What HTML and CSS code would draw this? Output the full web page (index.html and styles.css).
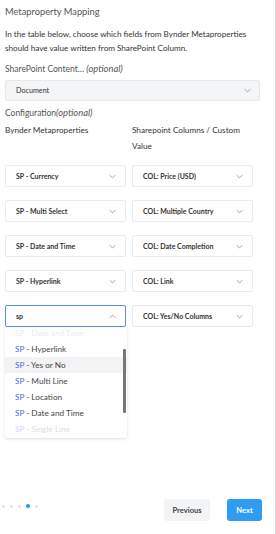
FILE: index.html
```html
<!DOCTYPE html>
<html>
<head>
<meta charset="utf-8">
<link rel="stylesheet" href="styles.css">
</head>
<body>
<div class="panel">
  <div class="content">
    <h1 class="title">Metaproperty Mapping</h1>
    <p class="intro">In the table below, choose which fields from Bynder Metaproperties should have value written from SharePoint Column.</p>
    <div class="label">SharePoint Content… <em>(optional)</em></div>
    <div class="select grey"><span>Document</span><svg class="chev" viewBox="0 0 10 6"><path d="M1 1l4 4 4-4"/></svg></div>
    <div class="label cfg">Configuration<em>(optional)</em></div>
    <div class="heads">
      <div class="colhead">Bynder Metaproperties</div>
      <div class="colhead">Sharepoint Columns / Custom Value</div>
    </div>
    <div class="rows">
      <div class="select"><span>SP - Currency</span><svg class="chev" viewBox="0 0 10 6"><path d="M1 1l4 4 4-4"/></svg></div>
      <div class="select"><span>COL: Price (USD)</span><svg class="chev" viewBox="0 0 10 6"><path d="M1 1l4 4 4-4"/></svg></div>

      <div class="select"><span>SP - Multi Select</span><svg class="chev" viewBox="0 0 10 6"><path d="M1 1l4 4 4-4"/></svg></div>
      <div class="select"><span>COL: Multiple Country</span><svg class="chev" viewBox="0 0 10 6"><path d="M1 1l4 4 4-4"/></svg></div>

      <div class="select"><span>SP - Date and Time</span><svg class="chev" viewBox="0 0 10 6"><path d="M1 1l4 4 4-4"/></svg></div>
      <div class="select"><span>COL: Date Completion</span><svg class="chev" viewBox="0 0 10 6"><path d="M1 1l4 4 4-4"/></svg></div>

      <div class="select"><span>SP - Hyperlink</span><svg class="chev" viewBox="0 0 10 6"><path d="M1 1l4 4 4-4"/></svg></div>
      <div class="select"><span>COL: Link</span><svg class="chev" viewBox="0 0 10 6"><path d="M1 1l4 4 4-4"/></svg></div>

      <div class="combo">
        <div class="select focus"><span>sp</span><svg class="chev" viewBox="0 0 10 6"><path d="M1 5l4-4 4 4"/></svg></div>
        <div class="menu">
          <div class="menu-inner">
            <div class="opt cut"><b>SP</b> - Date and Time</div>
            <div class="opt"><b>SP</b> - Hyperlink</div>
            <div class="opt hl"><b>SP</b> - Yes or No</div>
            <div class="opt"><b>SP</b> - Multi Line</div>
            <div class="opt"><b>SP</b> - Location</div>
            <div class="opt"><b>SP</b> - Date and Time</div>
            <div class="opt faded"><b>SP</b> - Single Line</div>
          </div>
          <div class="thumb"></div>
        </div>
      </div>
      <div class="select"><span>COL: Yes/No Columns</span><svg class="chev" viewBox="0 0 10 6"><path d="M1 1l4 4 4-4"/></svg></div>
    </div>
  </div>
  <div class="footer">
    <div class="dots"><i></i><i></i><i></i><i class="on"></i><i></i></div>
    <div class="buttons">
      <button class="btn prev">Previous</button>
      <button class="btn next">Next</button>
    </div>
  </div>
</div>
</body>
</html>
```
FILE: styles.css
```css
* { box-sizing: border-box; }
html, body { margin: 0; padding: 0; background: #fff; }
body { font-family: "Lato", "Liberation Sans", sans-serif; color: #333; }
.panel {
  width: 276px;
  height: 534px;
  border-right: 1px solid #dcdcdc;
  display: flex;
  flex-direction: column;
}
.content { padding: 0 15px 0 5px; flex: 1; }
.title {
  margin: 0;
  padding-top: 5px;
  font-size: 9.3px;
  line-height: 14px;
  font-weight: 400;
  color: #555;
}
.intro {
  margin: 8px 0 0;
  font-size: 8.15px;
  line-height: 14px;
  color: #333;
}
.label {
  margin-top: 7px;
  font-size: 8.5px;
  line-height: 14px;
  color: #555;
}
.label em { font-style: italic; font-size: 1.1em; }
.label.cfg { margin-top: 5px; }
.select {
  position: relative;
  height: 22px;
  border: 1px solid #ebebeb;
  border-radius: 2px;
  background: #fff;
  display: flex;
  align-items: center;
  justify-content: space-between;
  padding: 0 9px 0 10px;
  font-size: 7px;
  font-weight: 700;
  color: #333;
}
.select.grey {
  margin-top: 4px;
  height: 21px;
  background: #f4f5f6;
  border-color: #e8e9eb;
  font-weight: 400;
  font-size: 7.2px;
  padding-left: 10px;
  padding-right: 8px;
}
.chev { width: 7px; height: 5px; fill: none; stroke: #888; stroke-width: 1.1; }
.heads, .rows {
  display: grid;
  grid-template-columns: 121px 121px;
  column-gap: 6px;
}
.heads { margin-top: 2px; }
.rows { margin-top: 11px; row-gap: 13px; }
.colhead {
  font-size: 8.2px;
  line-height: 16px;
  color: #333;
}
.combo { position: relative; }
.select.focus { border-color: #5b8df0; }
.menu {
  position: absolute;
  left: 0;
  top: 23px;
  width: 122px;
  height: 110px;
  background: #fff;
  border-radius: 2px;
  box-shadow: 0 1px 3px rgba(0,0,0,0.12);
  overflow: hidden;
  z-index: 5;
}
.menu-inner { margin-top: -3px; }
.opt {
  height: 16px;
  line-height: 16px;
  padding-left: 10px;
  font-family: "Lato", "Inter", sans-serif;
  font-size: 8.2px;
  color: #444;
}
.opt b { font-weight: 400; color: #4a6cf0; }
.opt.hl { background: #f3f3f5; }
.opt.faded { color: #ddd; }
.opt.faded b { color: #cfd8fb; }
.opt.cut { color: #ececec; }
.opt.cut b { color: #ececec; }
.thumb {
  position: absolute;
  right: 1px;
  top: 21px;
  width: 3px;
  height: 64px;
  background: #777;
  border-radius: 1px;
}
.footer {
  height: 40px;
  display: flex;
  align-items: flex-start;
  justify-content: space-between;
  padding: 0 13px 0 2px;
}
.dots { display: flex; align-items: center; gap: 5px; margin-top: 10px; }
.dots i { display: block; width: 3px; height: 3px; border-radius: 50%; background: #e2e2e2; }
.dots i.on { width: 4px; height: 4px; background: #2596f0; }
.buttons { display: flex; gap: 17px; margin-top: 5px; }
.btn {
  height: 22px;
  border: 0;
  border-radius: 3px;
  font-family: "Lato", sans-serif;
  font-size: 7.6px;
  font-weight: 700;
  padding: 0;
}
.prev { width: 46px; background: #f3f4f6; color: #444; }
.next { width: 35px; background: #2d9cf2; color: #fff; }
```
